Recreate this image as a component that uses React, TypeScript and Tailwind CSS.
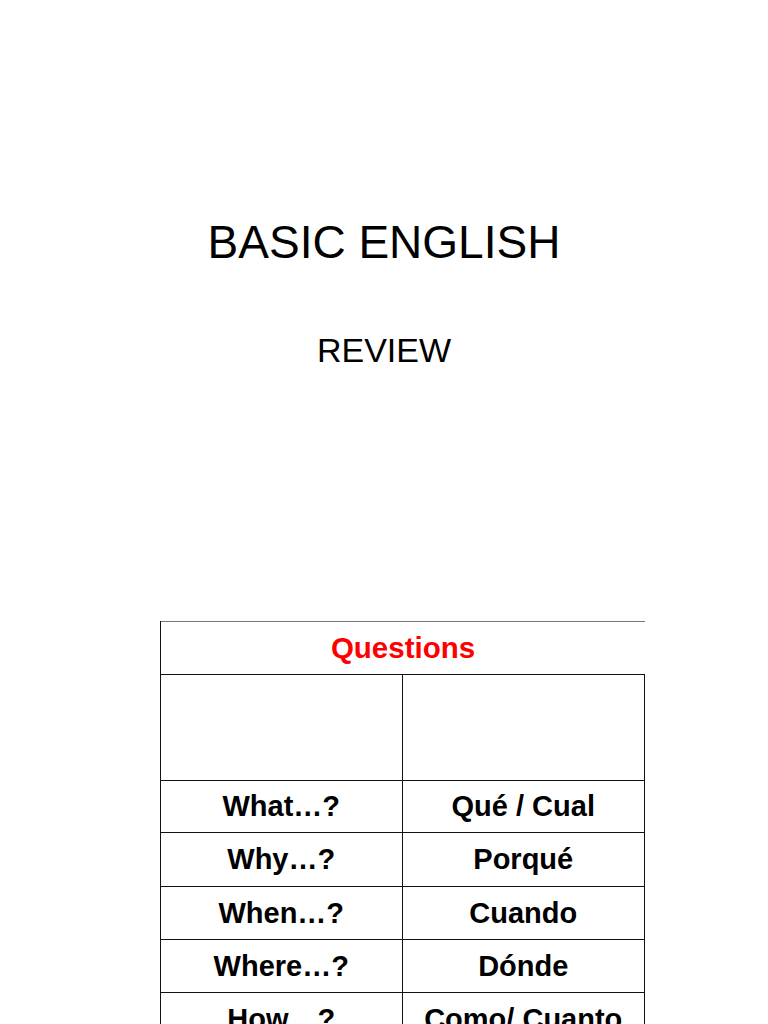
const rows: [string, string, string][] = [
  ['', '', 'h-[106px]'],
  ['What…?', 'Qué / Cual', 'h-[52px]'],
  ['Why…?', 'Porqué', 'h-[54px]'],
  ['When…?', 'Cuando', 'h-[53px]'],
  ['Where…?', 'Dónde', 'h-[53px]'],
  ['How…?', 'Como/ Cuanto', 'h-[53px]'],
];

export default function App() {
  return (
    <div className="w-[768px] h-[1024px] overflow-hidden bg-white text-black font-['Liberation_Sans',Arial,sans-serif]">
      <h1 className="pt-[219px] text-center text-[46px] leading-none">BASIC ENGLISH</h1>
      <h2 className="mt-[68px] text-center text-[34px] leading-none">REVIEW</h2>

      <div className="mt-[254px] ml-[160px] w-[485px] border-l border-[#111]">
        <div className="h-[54px] border-t border-t-[#777] border-b border-b-[#111] flex items-center justify-center">
          <span className="text-[29.5px] font-bold text-[#ff0000] leading-none">Questions</span>
        </div>
        {rows.map(([en, es, h], i) => (
          <div key={i} className={`grid grid-cols-2 border-r border-b border-[#111] ${h}`}>
            <div className="border-r border-[#111] flex items-center justify-center text-[29px] font-bold leading-none">
              {en}
            </div>
            <div className="flex items-center justify-center text-[29px] font-bold leading-none">
              {es}
            </div>
          </div>
        ))}
      </div>
    </div>
  );
}
